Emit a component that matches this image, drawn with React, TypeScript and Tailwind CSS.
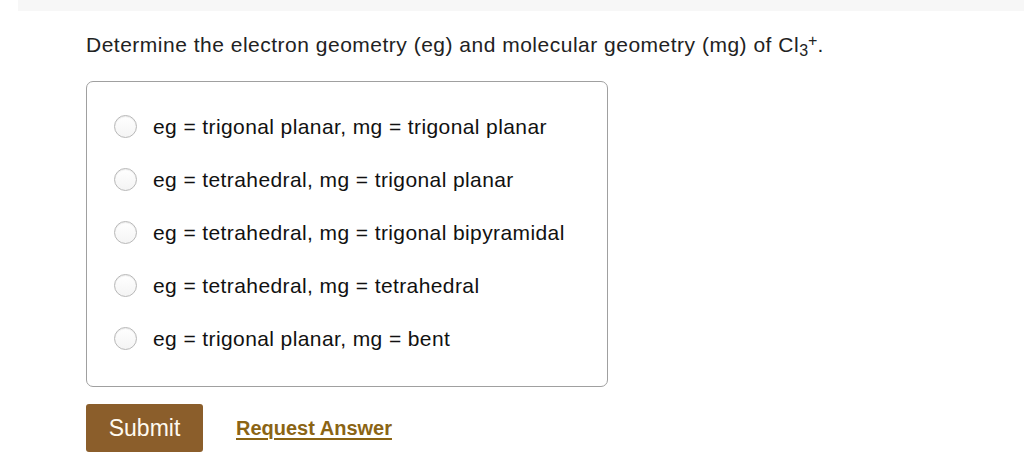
import React from "react";

const options = [
  "eg = trigonal planar, mg = trigonal planar",
  "eg = tetrahedral, mg = trigonal planar",
  "eg = tetrahedral, mg = trigonal bipyramidal",
  "eg = tetrahedral, mg = tetrahedral",
  "eg = trigonal planar, mg = bent",
];

export default function App() {
  return (
    <div className="w-[1024px] h-[462px] bg-white overflow-hidden" style={{ fontFamily: '"Liberation Sans", Arial, sans-serif' }}>
      <div className="ml-[18px] h-[11px] bg-[#f7f7f7]" />
      <div className="pl-[86px] pt-[22px]">
        <p className="h-[24px] text-[21px] leading-[24px] tracking-[0.5px] text-[#222]">
          Determine the electron geometry (eg) and molecular geometry (mg) of Cl
          <span className="relative top-[4px] text-[16px] leading-none tracking-normal">3</span>
          <span className="relative -top-[6px] text-[16px] leading-none tracking-normal">+</span>.
        </p>
        <div className="mt-[24px] w-[522px] h-[306px] rounded-[7px] border-[1.5px] border-[#a0a0a0] pt-[33px] pl-[27px]">
          <div className="flex flex-col gap-[30px]">
            {options.map((o) => (
              <label key={o} className="flex items-center h-[23px]">
                <span className="w-[23px] h-[23px] rounded-full border border-[#b8b8b8] bg-gradient-to-b from-white to-[#f4f4f4] shadow-[inset_0_1px_1px_rgba(0,0,0,0.08)]" />
                <span className="ml-[16px] text-[21px] leading-[24px] tracking-[0.4px] text-[#111]">{o}</span>
              </label>
            ))}
          </div>
        </div>
        <div className="mt-[17px] flex items-center">
          <button className="w-[117px] h-[48px] rounded-[3px] bg-[#8b5e2b] text-[#fffaf0] text-[23px]">Submit</button>
          <a className="ml-[33px] text-[20px] font-bold text-[#8b6414] underline underline-offset-[3px]">Request Answer</a>
        </div>
      </div>
    </div>
  );
}
